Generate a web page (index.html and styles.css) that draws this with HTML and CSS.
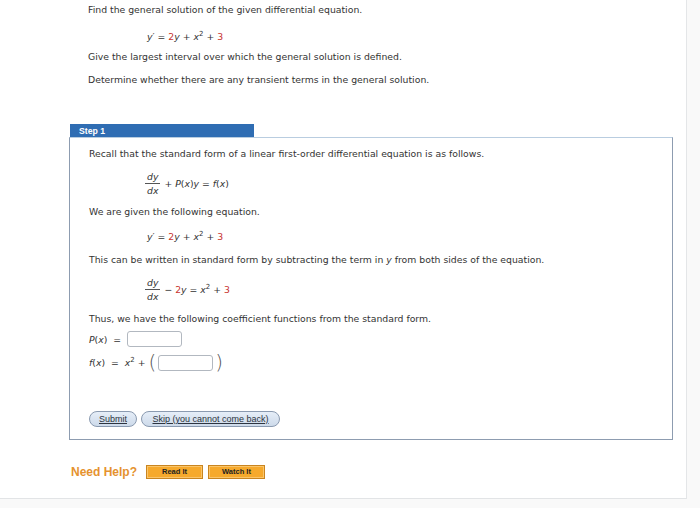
FILE: index.html
```html
<!DOCTYPE html>
<html>
<head>
<meta charset="utf-8">
<link rel="stylesheet" href="styles.css">
</head>
<body>
<div class="page">
  <div class="question">
    <p class="q1">Find the general solution of the given differential equation.</p>
    <div class="eq eq-top"><i>y</i>&prime; = <span class="red">2</span><i>y</i> + <i>x</i><sup>2</sup> + <span class="red">3</span></div>
    <p class="q2">Give the largest interval over which the general solution is defined.</p>
    <p class="q3">Determine whether there are any transient terms in the general solution.</p>
  </div>

  <div class="step">
    <div class="step-head">Step 1</div>
    <div class="step-body">
      <p class="s1">Recall that the standard form of a linear first-order differential equation is as follows.</p>
      <div class="eq eq-frac eq-frac1">
        <span class="frac"><span class="num"><i>dy</i></span><span class="den"><i>dx</i></span></span>
        <span class="rest">+ <i>P</i>(<i>x</i>)<i>y</i> = <i>f</i>(<i>x</i>)</span>
      </div>
      <p class="s2">We are given the following equation.</p>
      <div class="eq eq-given"><i>y</i>&prime; = <span class="red">2</span><i>y</i> + <i>x</i><sup>2</sup> + <span class="red">3</span></div>
      <p class="s3">This can be written in standard form by subtracting the term in <i>y</i> from both sides of the equation.</p>
      <div class="eq eq-frac eq-frac2">
        <span class="frac"><span class="num"><i>dy</i></span><span class="den"><i>dx</i></span></span>
        <span class="rest">&minus; <span class="red">2</span><i>y</i> = <i>x</i><sup>2</sup> + <span class="red">3</span></span>
      </div>
      <p class="s4">Thus, we have the following coefficient functions from the standard form.</p>
      <div class="row row-p"><span class="lbl"><i>P</i>(<i>x</i>) &nbsp;=&nbsp;</span><span class="box"></span></div>
      <div class="row row-f"><span class="lbl"><i>f</i>(<i>x</i>) &nbsp;=&nbsp; <i>x</i><sup>2</sup> +</span><span class="paren">(</span><span class="box"></span><span class="paren">)</span></div>
      <div class="buttons">
        <span class="btn btn-submit">Submit</span>
        <span class="btn btn-skip">Skip (you cannot come back)</span>
      </div>
    </div>
  </div>

  <div class="help">
    <span class="help-text">Need Help?</span>
    <span class="obtn">Read It</span>
    <span class="obtn">Watch It</span>
  </div>
</div>
</body>
</html>
```

FILE: styles.css
```css
html {
  background: #f9f9f9;
}
body {
  margin: 0;
  font-family: "DejaVu Sans", Verdana, sans-serif;
  font-size: 9.3px;
  color: #333;
}
.page {
  width: 686px;
  height: 498px;
  background: #fff;
  border-right: 1px solid #e4e6e8;
  border-bottom: 1px solid #e2e4e6;
  overflow: hidden;
}
p {
  margin: 0;
  line-height: 12px;
}
sup {
  font-size: 7px;
  line-height: 0;
  vertical-align: 4px;
}
.red {
  color: #c8332f;
}
.question {
  padding-left: 88px;
  padding-top: 4px;
}
.eq {
  line-height: 12px;
}
.eq-top {
  margin-top: 15px;
  padding-left: 59px;
}
.q2 {
  margin-top: 8px;
}
.q3 {
  margin-top: 11px;
}
.step {
  margin-top: 38px;
  margin-left: 69px;
  width: 604px;
}
.step-head {
  margin-left: 1px;
  width: 175px;
  height: 14px;
  line-height: 14px;
  background: #2f6db3;
  color: #fff;
  font-family: "Liberation Sans", Arial, sans-serif;
  font-weight: bold;
  font-size: 8.7px;
  padding-left: 9px;
}
.step-body {
  border: 1px solid #8d9cb0;
  border-top-color: #b9cde0;
  height: 301px;
  padding-left: 19px;
  margin-top: -1px;
}
.s1 {
  margin-top: 10px;
}
.frac {
  display: inline-flex;
  flex-direction: column;
  align-items: center;
  line-height: 9px;
}
.frac .num {
  border-bottom: 1px solid #555;
  padding: 0 2px 2px;
}
.frac .den {
  padding-top: 2px;
}
.eq-frac {
  height: 23px;
  padding-left: 56px;
  display: flex;
  align-items: center;
  gap: 4px;
}
.eq-frac1 {
  margin-top: 12px;
}
.s2 {
  margin-top: 11px;
}
.eq-given {
  margin-top: 13px;
  padding-left: 58px;
}
.s3 {
  margin-top: 11px;
}
.eq-frac2 {
  margin-top: 12px;
}
.s4 {
  margin-top: 12px;
}
.row {
  display: flex;
  align-items: center;
}
.row-p {
  margin-top: 6px;
  height: 16px;
}
.row-f {
  margin-top: 7px;
  height: 17px;
}
.lbl {
  margin-right: 3px;
}
.box {
  display: inline-block;
  width: 53px;
  height: 14px;
  border: 1px solid #b2b8c0;
  border-radius: 3px;
  background: #fff;
}
.paren {
  font-size: 20px;
  line-height: 17px;
  color: #555;
  font-weight: 300;
}
.row-f .box {
  margin: 0 2px;
}
.buttons {
  margin-top: 40px;
  display: flex;
  gap: 4px;
}
.btn {
  display: inline-block;
  height: 14px;
  line-height: 14px;
  border: 1px solid #8a9ab0;
  border-radius: 8px;
  background: linear-gradient(#e6eef8, #cddaea);
  font-family: "Liberation Sans", Arial, sans-serif;
  font-size: 9px;
  color: #2c3440;
  text-decoration: underline;
  text-align: center;
}
.btn-submit {
  width: 46px;
}
.btn-skip {
  width: 137px;
}
.help {
  margin-top: 25px;
  margin-left: 71px;
  display: flex;
  align-items: center;
}
.help-text {
  font-family: "Liberation Sans", Arial, sans-serif;
  font-size: 12px;
  font-weight: bold;
  color: #e5922f;
  margin-right: 9px;
}
.obtn {
  display: inline-block;
  width: 55px;
  height: 12px;
  line-height: 12px;
  border: 1px solid #c98520;
  box-shadow: inset 0 0 0 1px #fbc56a;
  background: #f6a92c;
  font-family: "Liberation Sans", Arial, sans-serif;
  font-size: 7.5px;
  font-weight: bold;
  color: #222;
  text-align: center;
  margin-right: 5px;
}
```
